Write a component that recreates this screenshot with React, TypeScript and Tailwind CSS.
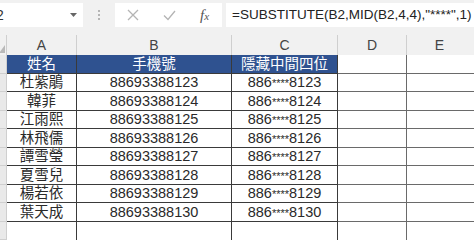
import React from "react";

const names = ["杜紫鵑", "韓菲", "江雨熙", "林飛儒", "譚雪瑩", "夏雪兒", "楊若依", "葉天成"];
const phones = ["88693388123", "88693388124", "88693388125", "88693388126", "88693388127", "88693388128", "88693388129", "88693388130"];

const font = { fontFamily: '"Liberation Sans", Arial, "Noto Sans CJK TC", sans-serif' };

function Masked({ p }: { p: string }) {
  return (
    <span>
      {p.slice(0, 3)}
      <span className="text-[11px]">****</span>
      {p.slice(7)}
    </span>
  );
}

function Row({ a, b, c, header, last }: { a: string; b: string; c: React.ReactNode; header?: boolean; last?: boolean }) {
  const tbl = header
    ? "bg-[#2f5290] text-white border-r border-b border-[#3a3a3a]"
    : "text-[#2a2a2a] border-r border-b border-[#3a3a3a]";
  return (
    <div className="flex h-[18.5px] text-[14.5px] leading-none">
      <div className="w-[7px] shrink-0 bg-[#e9e9e9] border-r border-b border-[#cfcfcf]" />
      <div className={`w-[70px] shrink-0 flex items-center justify-center ${last ? "border-r border-[#3a3a3a]" : tbl}`}>{a}</div>
      <div className={`w-[155px] shrink-0 flex items-center justify-center ${last ? "border-r border-[#3a3a3a]" : tbl}`}>{b}</div>
      <div className={`w-[106px] shrink-0 flex items-center justify-center ${last ? "border-r border-[#3a3a3a]" : tbl}`}>{c}</div>
      <div className={`w-[69px] shrink-0 border-r border-[#6a6a6a] ${last ? "" : "border-b"}`} />
      <div className={`flex-1 border-[#6a6a6a] ${last ? "" : "border-b"}`} />
    </div>
  );
}

export default function App() {
  return (
    <div className="w-[474px] h-[241px] overflow-hidden bg-white" style={font}>
      {/* formula toolbar */}
      <div className="h-[35px] bg-[#f1f1f1] flex pt-[3px]">
        <div className="w-[83px] h-[24px] bg-white flex items-center justify-between pr-[6px] overflow-hidden">
          <span className="text-[14px] text-[#333] ml-[-4px]">2</span>
          <svg width="7" height="4" viewBox="0 0 7 4"><path d="M0 0h7L3.5 4z" fill="#666" /></svg>
        </div>
        <div className="w-[32px] h-[24px] flex flex-col items-center justify-center gap-[2px]">
          <span className="w-[2px] h-[2px] bg-[#b5b5b5]" />
          <span className="w-[2px] h-[2px] bg-[#b5b5b5]" />
          <span className="w-[2px] h-[2px] bg-[#b5b5b5]" />
        </div>
        <div className="w-[107px] h-[24px] bg-white flex items-center pl-[12px]">
          <svg width="12" height="12" viewBox="0 0 12 12"><path d="M1 1l10 10M11 1L1 11" stroke="#b4b4b4" strokeWidth="1.3" /></svg>
          <svg className="ml-[24px]" width="13" height="11" viewBox="0 0 13 11"><path d="M1 5.5l4 4L12 1" stroke="#b4b4b4" strokeWidth="1.3" fill="none" /></svg>
          <span className="ml-[24px] text-[15px] italic text-[#555]" style={{ fontFamily: '"Liberation Serif", serif' }}>f<span className="text-[11px]">x</span></span>
        </div>
        <div className="w-[4px]" />
        <div className="flex-1 h-[24px] bg-white flex items-center pl-[6px] text-[13.5px] text-[#222] whitespace-nowrap overflow-hidden">
          =SUBSTITUTE(B2,MID(B2,4,4),"****",1)
        </div>
      </div>
      {/* column header */}
      <div className="flex h-[20px] bg-[#f1f1f1] text-[14px] text-[#444] leading-none">
        <div className="w-[7px] shrink-0 relative border-r border-[#cfcfcf]">
          <svg className="absolute right-[1px] bottom-[2px]" width="6" height="8" viewBox="0 0 6 8"><path d="M6 0v8H0z" fill="#b9b9b9" /></svg>
        </div>
        <div className="w-[70px] shrink-0 flex items-center justify-center border-r border-[#cfcfcf]">A</div>
        <div className="w-[155px] shrink-0 flex items-center justify-center border-r border-[#cfcfcf]">B</div>
        <div className="w-[106px] shrink-0 flex items-center justify-center border-r border-[#cfcfcf]">C</div>
        <div className="w-[69px] shrink-0 flex items-center justify-center border-r border-[#cfcfcf]">D</div>
        <div className="flex-1 flex items-center justify-center pr-[2px]">E</div>
      </div>
      <Row a="姓名" b="手機號" c="隱藏中間四位" header />
      {names.map((n, i) => (
        <Row key={n} a={n} b={phones[i]} c={<Masked p={phones[i]} />} />
      ))}
      <Row a="" b="" c="" last />
    </div>
  );
}
